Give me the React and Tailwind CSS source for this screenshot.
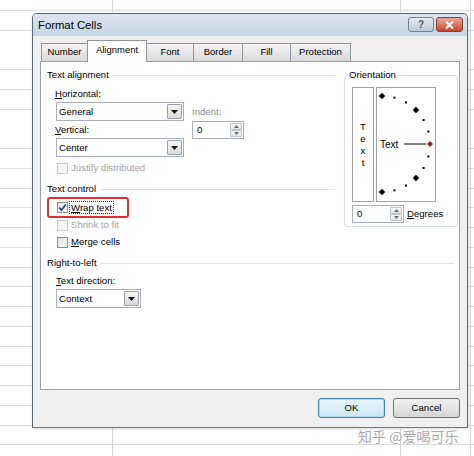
import React from "react";

const Arrow = () => (
  <svg width="7" height="4" viewBox="0 0 7 4">
    <path d="M0 0h7L3.5 4z" fill="#111" />
  </svg>
);

function Dropdown({ value, className }) {
  return (
    <div className={`flex border border-[#a9afb8] bg-white p-px ${className}`}>
      <span className="flex flex-1 items-center pl-px">{value}</span>
      <span className="flex w-[15px] items-center justify-center rounded-[1px] border border-[#98a2ad] bg-gradient-to-b from-[#f7f7f7] to-[#d8d8d8]">
        <Arrow />
      </span>
    </div>
  );
}

function Spinner({ className }) {
  return (
    <div className={`flex border border-[#a9afb8] bg-white p-px ${className}`}>
      <span className="flex flex-1 items-center pl-[3px]">0</span>
      <span className="flex w-[12px] flex-col">
        <span className="flex flex-1 items-center justify-center rounded-[1px] border border-[#bcc4cd] bg-gradient-to-b from-[#f8f8f8] to-[#e2e2e2]">
          <svg width="5" height="3" viewBox="0 0 5 3">
            <path d="M0 3h5L2.5 0z" fill="#6d6d6d" />
          </svg>
        </span>
        <span className="flex flex-1 items-center justify-center rounded-[1px] border border-[#bcc4cd] bg-gradient-to-b from-[#f8f8f8] to-[#e2e2e2]">
          <svg width="5" height="3" viewBox="0 0 5 3">
            <path d="M0 0h5L2.5 3z" fill="#6d6d6d" />
          </svg>
        </span>
      </span>
    </div>
  );
}

function Check({ checked, disabled }) {
  return (
    <span
      className={`flex h-[11px] w-[11px] shrink-0 items-center justify-center border ${
        disabled
          ? "border-[#c9c9c9] bg-[#f6f6f6]"
          : "border-[#8e8f8f] bg-gradient-to-br from-[#dedede] to-white"
      }`}
    >
      {checked && (
        <svg width="9" height="9" viewBox="0 0 9 9">
          <path d="M1.3 4.6l2.2 2.5L7.8 1.4" fill="none" stroke="#21409a" strokeWidth="1.7" />
        </svg>
      )}
    </span>
  );
}

function Header({ children, className }) {
  return (
    <div className={`flex h-[12px] items-center ${className}`}>
      <span className="whitespace-nowrap">{children}</span>
      <span className="ml-[4px] h-px flex-1 bg-[#dde2e7]" />
    </div>
  );
}

// the quarter circle of the orientation box
function Arc() {
  const cx = 5;
  const cy = 56;
  const r = 48;
  const pts = [90, 75, 60, 45, 30, 15, -15, -30, -45, -60, -75, -90].map((a) => ({
    a,
    x: cx + r * Math.cos((a * Math.PI) / 180),
    y: cy - r * Math.sin((a * Math.PI) / 180),
  }));
  return (
    <svg width="58" height="113" viewBox="0 0 58 113">
      {pts.map((p) =>
        Math.abs(p.a) % 45 === 0 ? (
          <polygon
            key={p.a}
            points={`${p.x},${p.y - 3.2} ${p.x + 3.2},${p.y} ${p.x},${p.y + 3.2} ${p.x - 3.2},${p.y}`}
            fill="#000"
          />
        ) : (
          <rect key={p.a} x={p.x - 1} y={p.y - 1} width="2" height="2" fill="#000" />
        )
      )}
      <text x="3" y="59.5" fontSize="10" fontFamily="Liberation Sans, sans-serif" fill="#000">
        Text
      </text>
      <line x1="27" y1="56" x2="49" y2="56" stroke="#000" strokeWidth="1" />
      <polygon points="53,53 56,56 53,59 50,56" fill="#a31f1f" />
    </svg>
  );
}

const tabs = [
  ["Number", "w-[47px]"],
  ["Alignment", "w-[60px]"],
  ["Font", "w-[48px]"],
  ["Border", "w-[50px]"],
  ["Fill", "w-[49px]"],
  ["Protection", "w-[61px]"],
];

export default function App() {
  return (
    <div className="relative h-[456px] w-[474px] overflow-hidden bg-white font-['Liberation_Sans',sans-serif] text-black">
      {/* spreadsheet behind the dialog */}
      <div className="flex h-full bg-[repeating-linear-gradient(to_bottom,transparent_0px,transparent_10px,#dcdcdc_10px,#dcdcdc_11px,transparent_11px,transparent_19.75px)]">
        <div className="w-[113px] border-r border-[#d6d6d6]" />
        <div className="w-[288px] border-r border-[#d6d6d6]" />
        <div className="w-[70px] border-r border-[#d6d6d6]" />
      </div>

      {/* Format Cells dialog */}
      <div className="absolute left-[32px] top-[13px] flex h-[415px] w-[436px] flex-col overflow-hidden rounded-t-[5px] border border-[#5b6875] border-b-[#3f8c98] bg-[#f0f0f0] shadow-[1px_1px_3px_rgba(0,0,0,0.15)]">
        <div className="flex h-[22px] shrink-0 items-start bg-gradient-to-b from-[#dbe6f1] to-[#c6d5e4] pl-[5px] pr-[4px]">
          <span className="mt-[4px] text-[11.3px] leading-[14px]">Format Cells</span>
          <div className="ml-auto mt-[3px] flex gap-[2px]">
            <span className="flex h-[15px] w-[26px] items-center justify-center rounded-[3px] border border-[#6f8192] bg-gradient-to-b from-[#e6edf4] to-[#b9c9d9] text-[10px] font-bold leading-none text-[#4a5866]">
              ?
            </span>
            <span className="flex h-[15px] w-[27px] items-center justify-center rounded-[3px] border border-[#8b3b2c] bg-gradient-to-b from-[#e9a898] to-[#c4462f]">
              <svg width="9" height="8" viewBox="0 0 9 8">
                <path d="M1 0.5l7 7M8 0.5l-7 7" stroke="#fff" strokeWidth="2" />
              </svg>
            </span>
          </div>
        </div>

        <div className="flex flex-1 flex-col px-[7px] pt-[4px]">
          {/* tabs */}
          <div className="flex h-[21px] items-end pl-px">
            {tabs.map(([label, w], i) =>
              label === "Alignment" ? (
                <div
                  key={label}
                  className={`relative z-10 -mb-px -ml-px flex h-[22px] items-center justify-center border border-b-0 border-[#8d959e] bg-white pb-[2px] text-[9.5px] ${w}`}
                >
                  {label}
                </div>
              ) : (
                <div
                  key={label}
                  className={`flex h-[18px] items-center justify-center border border-b-0 border-[#8d959e] bg-gradient-to-b from-[#f4f4f4] to-[#d9d9d9] text-[9.5px] ${
                    i === 0 ? "" : "-ml-px"
                  } ${w}`}
                >
                  {label}
                </div>
              )
            )}
          </div>

          {/* tab page */}
          <div className="h-[329px] border border-[#9aa3ad] bg-white pl-[6px] pt-[7px] text-[9.6px] leading-[12px]">
            <div className="flex">
              <div className="w-[288px]">
                <Header>Text alignment</Header>
                <div className="flex pl-[9px]">
                  <div className="w-[128px]">
                    <div className="mt-[7px] h-[12px] -ml-px">
                      <span className="underline underline-offset-1">H</span>orizontal:
                    </div>
                    <Dropdown value="General" className="mt-[2px] h-[19px]" />
                    <div className="mt-[3px] h-[12px] -ml-px">
                      <span className="underline underline-offset-1">V</span>ertical:
                    </div>
                    <Dropdown value="Center" className="mt-[2px] h-[19px]" />
                  </div>
                  <div className="ml-[8px]">
                    <div className="mt-[25px] h-[12px] text-[#8e8e8e]">Indent:</div>
                    <Spinner className="mt-[3px] h-[18px] w-[52px]" />
                  </div>
                </div>
                <div className="mt-[5px] flex h-[12px] items-center pl-[10px] text-[#a3a3a3]">
                  <Check disabled />
                  <span className="ml-[3px]">Justify distributed</span>
                </div>
                <Header className="mt-[9px]">Text control</Header>
                <div className="mt-[2px] flex h-[21px] w-[82px] items-center rounded-[3px] border-2 border-[#e3302c] pl-[8px]">
                  <Check checked />
                  <span className="ml-px border border-dotted border-[#333] px-px leading-[11px]">
                    <span className="underline underline-offset-1">W</span>rap text
                  </span>
                </div>
                <div className="mt-px flex h-[12px] items-center pl-[10px] text-[#a3a3a3]">
                  <Check disabled />
                  <span className="ml-[3px]">Shrink to fit</span>
                </div>
                <div className="mt-[5px] flex h-[12px] items-center pl-[10px]">
                  <Check />
                  <span className="ml-[3px]">
                    <span className="underline underline-offset-1">M</span>erge cells
                  </span>
                </div>
              </div>

              <fieldset className="ml-[9px] h-[158px] w-[114px] rounded-[3px] border border-[#d6dde3] px-[7px]">
                <legend className="-ml-[4px] px-px leading-[12px]">Orientation</legend>
                <div className="mt-[6px] flex gap-[2px]">
                  <div className="flex h-[115px] w-[22px] flex-col items-center justify-center border border-[#a3a3a3] leading-[12px]">
                    <span>T</span>
                    <span>e</span>
                    <span>x</span>
                    <span>t</span>
                  </div>
                  <div className="h-[115px] w-[60px] border border-[#a3a3a3]">
                    <Arc />
                  </div>
                </div>
                <div className="mt-[3px] flex items-center">
                  <Spinner className="h-[18px] w-[52px]" />
                  <span className="ml-[3px]">
                    <span className="underline underline-offset-1">D</span>egrees
                  </span>
                </div>
              </fieldset>
            </div>

            <Header className="mr-[5px] mt-[9px]">Right-to-left</Header>
            <div className="mt-[6px] h-[12px] pl-[9px]">
              <span className="underline underline-offset-1">T</span>ext direction:
            </div>
            <Dropdown value="Context" className="ml-[9px] mt-[2px] h-[19px] w-[85px]" />
          </div>

          {/* buttons */}
          <div className="mt-[8px] flex justify-end gap-[8px] text-[9.6px]">
            <div className="flex h-[20px] w-[67px] items-center justify-center rounded-[3px] border border-[#3c7fb1] bg-gradient-to-b from-[#eaf6fd] to-[#cde6f5] shadow-[inset_0_0_0_1px_#b4dcf3]">
              OK
            </div>
            <div className="flex h-[20px] w-[67px] items-center justify-center rounded-[3px] border border-[#707070] bg-gradient-to-b from-[#f2f2f2] to-[#d6d6d6]">
              Cancel
            </div>
          </div>
        </div>
      </div>

      {/* watermark */}
      <div className="absolute left-[358px] top-[427px] font-['Noto_Sans_CJK_SC',sans-serif] text-[14px] leading-[18px] text-[#ababab]">
        知乎 @爱喝可乐
      </div>
    </div>
  );
}
